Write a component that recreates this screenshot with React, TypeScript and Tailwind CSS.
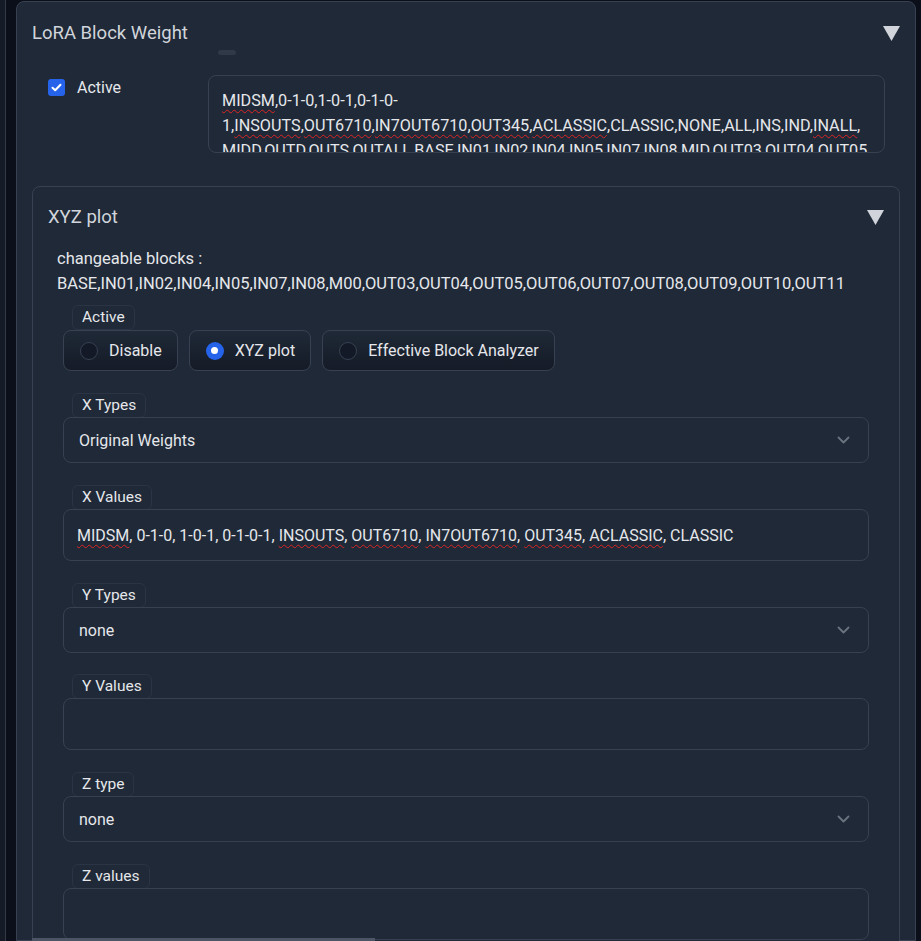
import React from "react";

const font = { fontFamily: '"Source Sans Pro", Roboto, "Noto Sans", sans-serif' };

function Spell({ children }: { children: React.ReactNode }) {
  return (
    <span className="underline decoration-wavy decoration-[#dc2626] decoration-1 underline-offset-[3px]">
      {children}
    </span>
  );
}

function Caret() {
  return (
    <svg width="17" height="15" viewBox="0 0 17 15">
      <polygon points="0,0 17,0 8.5,15" fill="#d1d5db" />
    </svg>
  );
}

function Chevron() {
  return (
    <svg width="13" height="8" viewBox="0 0 13 8" fill="none">
      <path d="M1.5 1.5 6.5 6.5 11.5 1.5" stroke="#6b7280" strokeWidth="1.8" strokeLinecap="round" strokeLinejoin="round" />
    </svg>
  );
}

function BlockLabel({ children }: { children: React.ReactNode }) {
  return (
    <div className="ml-[9px] self-start h-[25px] px-[9px] rounded-md border border-[#2b3444] bg-[#1f2937] text-[15.5px] leading-[23px] text-[#e5e7eb]">
      {children}
    </div>
  );
}

function Dropdown({ label, value, className = "" }: { label: string; value: string; className?: string }) {
  return (
    <div className={`flex flex-col ${className}`}>
      <BlockLabel>{label}</BlockLabel>
      <div className="-mt-px h-[46px] rounded-lg border border-[#374151] bg-[#1f2937] flex items-center justify-between pl-[15px] pr-[18px]">
        <span>{value}</span>
        <Chevron />
      </div>
    </div>
  );
}

function TextBox({ label, children, className = "" }: { label: string; children?: React.ReactNode; className?: string }) {
  return (
    <div className={`flex flex-col ${className}`}>
      <BlockLabel>{label}</BlockLabel>
      <div className="-mt-px h-[52px] rounded-lg border border-[#374151] bg-[#1f2937] flex items-center px-[13px] whitespace-nowrap overflow-hidden">
        {children}
      </div>
    </div>
  );
}

function Radio({ label, checked }: { label: string; checked?: boolean }) {
  return (
    <div className="h-[41px] flex items-center gap-[11px] pl-[16px] pr-[15px] rounded-lg border border-[#374151] bg-gradient-to-b from-[#1f2937] to-[#151b27]">
      {checked ? (
        <span className="w-[18px] h-[18px] rounded-full bg-[#2563eb] flex items-center justify-center">
          <span className="w-[7px] h-[7px] rounded-full bg-white" />
        </span>
      ) : (
        <span className="w-[18px] h-[18px] rounded-full bg-[#131926] border border-[#374151]" />
      )}
      <span>{label}</span>
    </div>
  );
}

export default function App() {
  return (
    <div className="h-[941px] overflow-hidden flex bg-[#0b0f19] text-[16px] leading-[25px] text-[#e5e7eb]" style={font}>
      <div className="w-[5px] bg-[#141a26]" />
      <div className="w-px bg-[#323a48]" />
      <div className="w-[10px] bg-[#0b0f19]" />

      {/* LoRA Block Weight */}
      <section className="mt-px w-[900px] shrink-0 rounded-t-lg border border-[#374151] bg-[#1f2937]">
        <div className="flex items-center justify-between pl-[15px] pr-[15px] pt-[19px] h-[43px]">
          <h2 className="text-[18.5px] leading-[24px] text-[#d1d5db]">LoRA Block Weight</h2>
          <Caret />
        </div>
        <div className="ml-[201px] mt-[5px] h-[5px] w-[18px] rounded-full bg-[#303947]" />

        <div className="mt-[20px] flex pl-[31px] pr-[30px]">
          <div className="w-[160px] shrink-0 mt-[4px] h-[17px] flex items-center gap-[12px]">
            <span className="w-[17px] h-[17px] rounded-[3px] bg-[#2563eb] flex items-center justify-center">
              <svg width="11" height="9" viewBox="0 0 11 9" fill="none">
                <path d="M1.5 4.8 4.2 7.3 9.5 1.7" stroke="white" strokeWidth="2" strokeLinecap="round" strokeLinejoin="round" />
              </svg>
            </span>
            <span>Active</span>
          </div>
          <div className="flex-1 h-[78px] rounded-lg border border-[#374151] bg-[#1f2937] px-[13px] pt-[12px] overflow-hidden whitespace-nowrap text-[16.2px]">
            <div>
              <Spell>MIDSM</Spell>,0-1-0,1-0-1,0-1-0-
            </div>
            <div>
              1,<Spell>INSOUTS</Spell>,<Spell>OUT6710</Spell>,<Spell>IN7OUT6710</Spell>,<Spell>OUT345</Spell>,
              <Spell>ACLASSIC</Spell>,CLASSIC,NONE,ALL,INS,IND,<Spell>INALL</Spell>,
            </div>
            <div>MIDD,OUTD,OUTS,OUTALL,BASE,IN01,IN02,IN04,IN05,IN07,IN08,MID,OUT03,OUT04,OUT05</div>
          </div>
        </div>

        {/* XYZ plot */}
        <section className="mt-[33px] mx-[15px] rounded-lg border border-[#374151] bg-[#1f2937] pb-6">
          <div className="flex items-center justify-between px-[15px] pt-[18px] h-[42px]">
            <h3 className="text-[18.5px] leading-[24px] text-[#d1d5db]">XYZ plot</h3>
            <Caret />
          </div>
          <div className="mt-[17px] pl-[24px] text-[16.5px]">
            <p>changeable blocks :</p>
            <p>BASE,IN01,IN02,IN04,IN05,IN07,IN08,M00,OUT03,OUT04,OUT05,OUT06,OUT07,OUT08,OUT09,OUT10,OUT11</p>
          </div>

          <div className="px-[30px]">
            <div className="mt-[9px] flex flex-col">
              <BlockLabel>Active</BlockLabel>
              <div className="flex gap-[11px]">
                <Radio label="Disable" />
                <Radio label="XYZ plot" checked />
                <Radio label="Effective Block Analyzer" />
              </div>
            </div>

            <Dropdown className="mt-[22px]" label="X Types" value="Original Weights" />
            <TextBox className="mt-[22px]" label="X Values">
              <span>
                <Spell>MIDSM</Spell>, 0-1-0, 1-0-1, 0-1-0-1, <Spell>INSOUTS</Spell>, <Spell>OUT6710</Spell>,{" "}
                <Spell>IN7OUT6710</Spell>, <Spell>OUT345</Spell>, <Spell>ACLASSIC</Spell>, CLASSIC
              </span>
            </TextBox>
            <Dropdown className="mt-[22px]" label="Y Types" value="none" />
            <TextBox className="mt-[21px]" label="Y Values" />
            <Dropdown className="mt-[22px]" label="Z type" value="none" />
            <TextBox className="mt-[22px]" label="Z values" />
          </div>
        </section>
      </section>

      <div className="fixed bottom-0 left-[32px] h-[3px] w-[343px] bg-[#4b5563]" />
    </div>
  );
}
